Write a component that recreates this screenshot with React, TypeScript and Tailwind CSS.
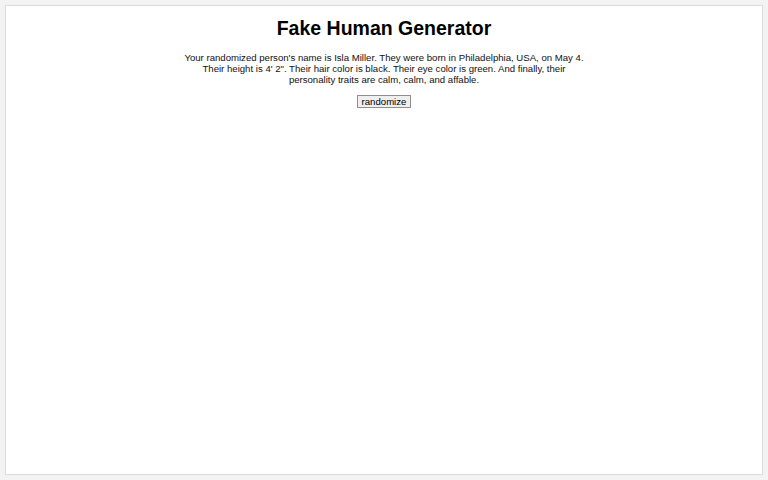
export default function App() {
  const person = {
    name: "Isla Miller",
    birthplace: "Philadelphia, USA",
    birthday: "May 4",
    height: "4' 2\"",
    hair: "black",
    eyes: "green",
    traits: ["calm", "calm", "affable"],
  };

  return (
    <div className="h-[480px] w-full bg-[#f3f3f3] p-[5px] font-['Liberation_Sans',Arial,sans-serif] text-black">
      <div className="flex h-[470px] flex-col items-center border border-[#dcdcdc] bg-white">
        <h1 className="mt-[10px] text-[19.5px] font-bold leading-[24px]">Fake Human Generator</h1>
        <p className="mt-[12px] max-w-[404px] text-center text-[9.6px] leading-[11px] text-[#111]">
          Your randomized person's name is {person.name}. They were born in {person.birthplace}, on{" "}
          {person.birthday}. Their height is {person.height}. Their hair color is {person.hair}. Their eye
          color is {person.eyes}. And finally, their personality traits are {person.traits[0]},{" "}
          {person.traits[1]}, and {person.traits[2]}.
        </p>
        <button className="mt-[10px] h-[13px] border border-[#8f8f8f] bg-[#efefef] px-[4px] text-[9.6px] leading-[11px]">
          randomize
        </button>
      </div>
    </div>
  );
}
